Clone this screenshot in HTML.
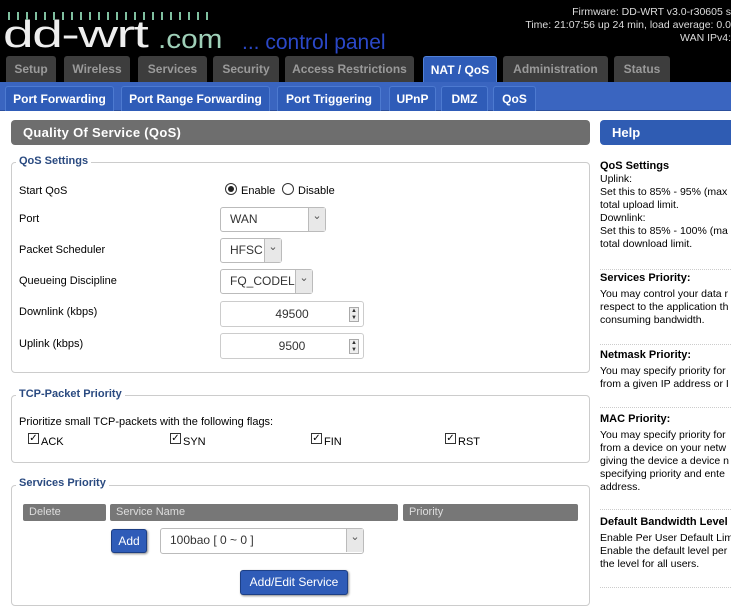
<!DOCTYPE html><html><head><style>
*{box-sizing:border-box}body{margin:0;width:731px;height:611px;overflow:hidden;background:#fff;font-family:"Liberation Sans",sans-serif;font-size:11px;color:#000;position:relative}
.a{position:absolute}
.top{left:0;top:0;width:731px;height:82px;background:#000}
.tab{position:absolute;top:56px;height:26px;background:#3d3d3d;color:#9a9a9a;font-weight:bold;font-size:12px;text-align:center;line-height:26px;border-radius:3px 3px 0 0}
.band{left:0;top:82px;width:731px;height:29px;background:#3a65c0;border-bottom:1px solid #2c4f9c}
.st{position:absolute;top:86px;height:25px;background:#2f5cb8;border:1px solid #4d7ad0;border-bottom:none;color:#fff;font-weight:bold;font-size:12px;text-align:center;line-height:24px;border-radius:3px 3px 0 0}
fieldset{position:absolute;margin:0;padding:0;border:1px solid #ccc;border-radius:4px}
.lg{position:absolute;background:#fff;color:#2a4a80;font-weight:bold;font-size:11px;padding:0 3px}
.lbl{position:absolute;left:19px}
.sel{position:absolute;height:25px;border:1px solid #bbb;border-radius:3px;background:#fff;font-size:12px;line-height:23px;padding-left:9px;color:#333}
.sel::after{content:"⌄";position:absolute;right:0;top:0;width:16px;height:23px;background:#e8e8e8;border-left:1px solid #bbb;text-align:center;line-height:16px;font-size:11px;color:#555}
.num{position:absolute;height:26px;border:1px solid #ccc;border-radius:3px;font-size:12px;line-height:24px;text-align:center;color:#333}
.sp{position:absolute;right:4px;top:5px;width:10px;height:15px;border:1px solid #aaa;background:#eee;font-size:6px;line-height:7px;color:#333}
.cb{position:absolute;width:11px;height:11px;border:1px solid #333;font-size:10px;line-height:9px;text-align:center}
.help{font-size:10.5px;line-height:13px;color:#000}
.hh{font-weight:bold;font-size:11px}
.hr{position:absolute;left:600px;width:131px;border-top:1px dotted #ccc}
.th{position:absolute;top:504px;height:17px;background:#777;color:#ddd;line-height:17px;padding-left:6px;border-radius:2px}
.btn{position:absolute;background:#2f5cb8;color:#fff;border:1px solid #1d3f85;border-radius:3px;text-align:center;font-size:12px;box-shadow:1px 1px 2px #888}
</style></head><body>
<div class="a top"></div>
<div class="a" style="left:3px;top:14px;color:#eee;font-size:38px;letter-spacing:-1px;line-height:42px;transform:scaleX(1.45);transform-origin:left">dd-wrt</div>
<div class="a" style="left:158px;top:24px;color:#9fd0b8;font-size:27px;line-height:30px;transform:scaleX(1.1);transform-origin:left">.com</div>
<div class="a" style="left:8px;top:12px;width:205px;height:8px;background:repeating-linear-gradient(90deg,#7fbf9f 0 2px,transparent 2px 9px)"></div>
<div class="a" style="left:242px;top:31px;color:#2b48c8;font-size:21px;line-height:24px">... control panel</div>
<div class="a" style="right:0;top:6px;color:#ddd;font-size:10.5px;line-height:13px;text-align:right;white-space:nowrap;width:240px">Firmware: DD-WRT v3.0-r30605 s<br>Time: 21:07:56 up 24 min, load average: 0.0<br>WAN IPv4: </div>
<div class="tab" style="left:6px;width:50px">Setup</div>
<div class="tab" style="left:64px;width:66px">Wireless</div>
<div class="tab" style="left:138px;width:69px">Services</div>
<div class="tab" style="left:213px;width:66px">Security</div>
<div class="tab" style="left:285px;width:129px">Access Restrictions</div>
<div class="tab" style="left:423px;width:74px;background:#2f5cb8;color:#fff;border:1px solid #5080d8;border-bottom:none">NAT / QoS</div>
<div class="tab" style="left:503px;width:105px">Administration</div>
<div class="tab" style="left:614px;width:56px">Status</div>
<div class="a band"></div>
<div class="st" style="left:5px;width:109px">Port Forwarding</div>
<div class="st" style="left:121px;width:149px">Port Range Forwarding</div>
<div class="st" style="left:277px;width:104px">Port Triggering</div>
<div class="st" style="left:389px;width:47px">UPnP</div>
<div class="st" style="left:441px;width:47px">DMZ</div>
<div class="st" style="left:493px;width:43px">QoS</div>

<div class="a" style="left:11px;top:120px;width:579px;height:25px;background:#6e6e6e;border-radius:4px;color:#fff;font-weight:bold;font-size:13px;line-height:25px;padding-left:12px;letter-spacing:.3px">Quality Of Service (QoS)</div>
<div class="a" style="left:600px;top:120px;width:131px;height:25px;background:#2f5cb3;border-radius:4px 0 0 4px;color:#fff;font-weight:bold;font-size:13px;line-height:25px;padding-left:12px">Help</div>

<fieldset style="left:11px;top:162px;width:579px;height:211px"></fieldset>
<div class="lg" style="left:16px;top:155px">QoS Settings</div>
<div class="lbl" style="top:185px">Start QoS</div>
<div class="a" style="left:225px;top:183px;width:12px;height:12px;border:1px solid #333;border-radius:50%"><div style="margin:2px;width:6px;height:6px;background:#222;border-radius:50%"></div></div>
<div class="a" style="left:241px;top:185px">Enable</div>
<div class="a" style="left:282px;top:183px;width:12px;height:12px;border:1px solid #333;border-radius:50%"></div>
<div class="a" style="left:298px;top:185px">Disable</div>
<div class="lbl" style="top:213px">Port</div>
<div class="sel" style="left:220px;top:207px;width:106px">WAN</div>
<div class="lbl" style="top:244px">Packet Scheduler</div>
<div class="sel" style="left:220px;top:238px;width:62px">HFSC</div>
<div class="lbl" style="top:275px">Queueing Discipline</div>
<div class="sel" style="left:220px;top:269px;width:93px">FQ_CODEL</div>
<div class="lbl" style="top:306px">Downlink (kbps)</div>
<div class="num" style="left:220px;top:301px;width:144px">49500<div class="sp">▲<br>▼</div></div>
<div class="lbl" style="top:338px">Uplink (kbps)</div>
<div class="num" style="left:220px;top:333px;width:144px">9500<div class="sp">▲<br>▼</div></div>

<fieldset style="left:11px;top:395px;width:579px;height:68px"></fieldset>
<div class="lg" style="left:16px;top:388px">TCP-Packet Priority</div>
<div class="a" style="left:19px;top:416px">Prioritize small TCP-packets with the following flags:</div>
<div class="cb" style="left:28px;top:433px">✓</div><div class="a" style="left:41px;top:436px">ACK</div>
<div class="cb" style="left:170px;top:433px">✓</div><div class="a" style="left:183px;top:436px">SYN</div>
<div class="cb" style="left:311px;top:433px">✓</div><div class="a" style="left:324px;top:436px">FIN</div>
<div class="cb" style="left:445px;top:433px">✓</div><div class="a" style="left:458px;top:436px">RST</div>

<fieldset style="left:11px;top:485px;width:579px;height:121px"></fieldset>
<div class="lg" style="left:16px;top:477px">Services Priority</div>
<div class="th" style="left:23px;width:83px">Delete</div>
<div class="th" style="left:110px;width:288px">Service Name</div>
<div class="th" style="left:403px;width:175px">Priority</div>
<div class="btn" style="left:111px;top:529px;width:36px;height:24px;line-height:22px">Add</div>
<div class="sel" style="left:160px;top:528px;width:204px;height:26px">100bao [ 0 ~ 0 ]</div>
<div class="btn" style="left:240px;top:570px;width:108px;height:25px;line-height:23px">Add/Edit Service</div>

<div class="a help" style="left:600px;top:160px;width:131px;white-space:nowrap;overflow:hidden">
<div class="hh">QoS Settings</div>Uplink:<br>Set this to 85% - 95% (max<br>total upload limit.<br>Downlink:<br>Set this to 85% - 100% (ma<br>total download limit.
<div class="hh" style="margin-top:21px">Services Priority:</div><div style="margin-top:3px">You may control your data r<br>respect to the application th<br>consuming bandwidth.</div>
<div class="hh" style="margin-top:22px">Netmask Priority:</div><div style="margin-top:3px">You may specify priority for<br>from a given IP address or I</div>
<div class="hh" style="margin-top:22px">MAC Priority:</div><div style="margin-top:3px">You may specify priority for<br>from a device on your netw<br>giving the device a device n<br>specifying priority and ente<br>address.</div>
<div class="hh" style="margin-top:22px">Default Bandwidth Level</div><div style="margin-top:3px">Enable Per User Default Lim<br>Enable the default level per<br>the level for all users.</div>
</div>
<div class="hr" style="top:269px"></div><div class="hr" style="top:344px"></div><div class="hr" style="top:407px"></div><div class="hr" style="top:509px"></div><div class="hr" style="top:587px"></div>
</body></html>
